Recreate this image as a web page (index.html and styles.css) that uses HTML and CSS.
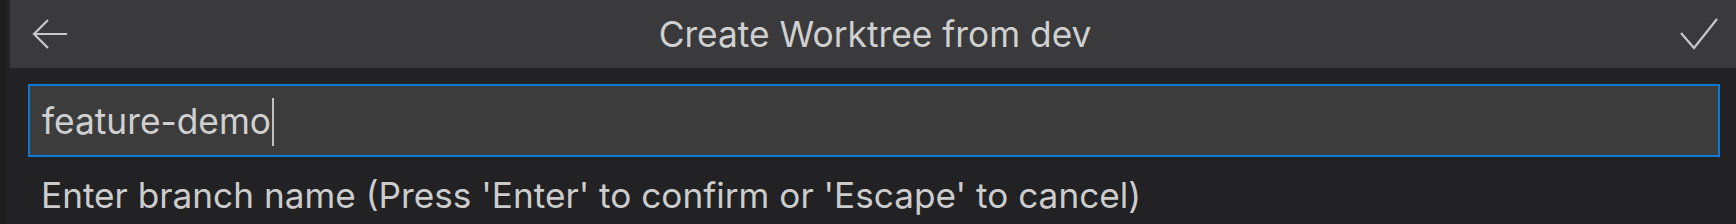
FILE: index.html
```html
<!DOCTYPE html>
<html>
<head>
<meta charset="utf-8">
<link rel="stylesheet" href="styles.css">
</head>
<body>
<div class="frame">
  <div class="panel">
    <div class="header">
      <div class="btn back">
        <svg width="36" height="32" viewBox="0 0 36 32"><path d="M35 16H2M16 2L2 16L16 30" fill="none" stroke="#c8c8c8" stroke-width="2.2"/></svg>
      </div>
      <div class="title">Create Worktree from dev</div>
      <div class="btn ok">
        <svg width="38" height="34" viewBox="0 0 38 34"><path d="M1 16L14 31L37 2" fill="none" stroke="#c8c8c8" stroke-width="2.2"/></svg>
      </div>
    </div>
    <div class="body">
      <div class="input"><span class="val">feature-demo</span><span class="caret"></span></div>
      <div class="msg">Enter branch name (Press 'Enter' to confirm or 'Escape' to cancel)</div>
    </div>
  </div>
</div>
</body>
</html>
```
FILE: styles.css
```css
html, body {
  margin: 0;
  padding: 0;
  background: #1d1d1e;
  height: 224px;
  overflow: hidden;
}
.frame {
  padding-left: 7px;
  height: 224px;
}
.panel {
  border-left: 3px solid #242426;
  background: #222224;
  height: 224px;
  font-family: "Inter", "Liberation Sans", sans-serif;
  color: #cccccc;
}
.header {
  height: 68px;
  background: #3a3a3c;
  display: flex;
  align-items: center;
  padding: 0 18px 0 22px;
}
.btn {
  width: 40px;
  display: flex;
  align-items: center;
}
.ok { justify-content: flex-end; }
.title {
  flex: 1;
  text-align: center;
  font-size: 35.3px;
  color: #d0d0d0;
}
.body {
  padding: 16px 16px 0 18px;
}
.input {
  height: 69px;
  box-sizing: content-box;
  border: 2px solid #0a7ad6;
  background: #3c3c3c;
  display: flex;
  align-items: center;
  padding-left: 12px;
  padding-top: 2px;
  height: 67px;
  font-size: 35.3px;
  color: #d0d0d0;
}
.caret {
  width: 2px;
  height: 48px;
  background: #c0c0c0;
  margin-left: 1px;
}
.msg {
  padding: 17px 0 0 13px;
  font-size: 35.2px;
  color: #cccccc;
}
```
